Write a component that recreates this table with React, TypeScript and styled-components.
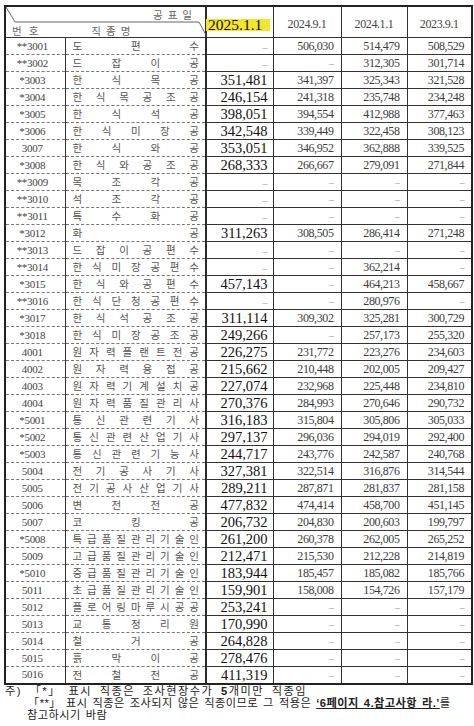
import React from "react"
import styled, { createGlobalStyle } from "styled-components"

const GlobalStyle = createGlobalStyle`
  html, body {
    margin: 0;
    padding: 0;
    background: #ffffff;
  }
`

const Page = styled.div`
  padding: 5px 3px 0 4px;
  width: 467px;
`

const WageTable = styled.table`
  width: 467px;
  border-collapse: collapse;
  table-layout: fixed;
  border: 2px solid #222;
`

const HeadRow = styled.tr`
  height: 30px;
`

const CornerCell = styled.th`
  position: relative;
  padding: 0;
  border-right: 2px solid #2a2a2a;
  border-bottom: 1px solid #333;
  font-weight: normal;
  vertical-align: top;
`

const CornerInner = styled.div`
  display: flex;
  flex-direction: column;
  justify-content: space-between;
  height: 30px;
  padding: 2px 8px 1px 6px;
  box-sizing: border-box;
  font-family: "Noto Sans CJK KR", sans-serif;
  font-size: 10.5px;
  line-height: 11px;
  color: #666;
`

const CornerTop = styled.div`
  text-align: right;
  letter-spacing: 5px;
`

const CornerBottom = styled.div`
  display: flex;
  gap: 46px;
`

const Spaced = styled.span<{ $gap: number }>`
  letter-spacing: ${(p) => p.$gap}px;
`

const Slash = styled.svg`
  position: absolute;
  left: 0;
  top: 0;
  pointer-events: none;
`

const DateCell = styled.th<{ $main?: boolean }>`
  padding: 5px 0 0 0;
  border-right: 1px solid #333;
  border-bottom: 1px solid #333;
  font-family: "Liberation Serif", serif;
  font-weight: normal;
  font-size: ${(p) => (p.$main ? "15.5px" : "12px")};
  letter-spacing: ${(p) => (p.$main ? "0" : "-0.4px")};
  color: ${(p) => (p.$main ? "#111" : "#444")};
  text-align: ${(p) => (p.$main ? "left" : "center")};
  vertical-align: middle;
`

const Marker = styled.span`
  display: inline-block;
  background: #f5e52c;
  line-height: 12px;
  padding: 0 3px 0 2px;
  margin-left: -1px;
  width: 59px;
`

const Row = styled.tr`
  height: 17px;
`

const CodeCell = styled.td`
  padding: 0 6px 0 0;
  border-right: 1px solid #333;
  border-bottom: 1px dashed #777;
  font-family: "Liberation Serif", serif;
  font-size: 11px;
  letter-spacing: -0.3px;
  color: #444;
  text-align: center;
  line-height: 1;
`

const NameCell = styled.td`
  padding: 0 6px 0 7px;
  border-right: 2px solid #2a2a2a;
  border-bottom: 1px dashed #777;
  font-family: "Noto Sans CJK KR", sans-serif;
  font-size: 10.5px;
  color: #555;
  line-height: 1;
`

const Spread = styled.div`
  display: flex;
  justify-content: space-between;
`

const ValueCell = styled.td<{ $main?: boolean }>`
  padding: 0 ${(p) => (p.$main ? "5px" : "7px")} 0 0;
  border-right: 1px solid #333;
  border-bottom: 1px solid #333;
  font-family: "Liberation Serif", serif;
  font-size: ${(p) => (p.$main ? "14.5px" : "12px")};
  letter-spacing: ${(p) => (p.$main ? "0" : "-0.4px")};
  color: ${(p) => (p.$main ? "#111" : "#3c3c3c")};
  text-align: right;
  line-height: 1;
`

const Dash = styled.span`
  font-size: 10px;
  color: #999;
`

const Notes = styled.div`
  font-family: "Liberation Sans", "Noto Sans CJK KR", sans-serif;
  font-size: 11.2px;
  line-height: 12px;
  color: #222;
`

const NoteLine = styled.div<{ $indent: number; $track: number; $words: number }>`
  padding-left: ${(p) => p.$indent}px;
  letter-spacing: ${(p) => p.$track}px;
  word-spacing: ${(p) => p.$words}px;
  white-space: nowrap;
`

const Ref = styled.span`
  font-weight: bold;
  text-decoration: underline;
`

type Entry = [string, string, string | null, string | null, string | null, string | null]

const rows: Entry[] = [
  ["**3001", "도편수", null, "506,030", "514,479", "508,529"],
  ["**3002", "드잡이공", null, null, "312,305", "301,714"],
  ["*3003", "한식목공", "351,481", "341,397", "325,343", "321,528"],
  ["*3004", "한식목공조공", "246,154", "241,318", "235,748", "234,248"],
  ["*3005", "한식석공", "398,051", "394,554", "412,988", "377,463"],
  ["*3006", "한식미장공", "342,548", "339,449", "322,458", "308,123"],
  ["3007", "한식와공", "353,051", "346,952", "362,888", "339,525"],
  ["*3008", "한식와공조공", "268,333", "266,667", "279,091", "271,844"],
  ["**3009", "목조각공", null, null, null, null],
  ["**3010", "석조각공", null, null, null, null],
  ["**3011", "특수화공", null, null, null, null],
  ["*3012", "화공", "311,263", "308,505", "286,414", "271,248"],
  ["**3013", "드잡이공편수", null, null, null, null],
  ["**3014", "한식미장공편수", null, null, "362,214", null],
  ["*3015", "한식와공편수", "457,143", null, "464,213", "458,667"],
  ["**3016", "한식단청공편수", null, null, "280,976", null],
  ["*3017", "한식석공조공", "311,114", "309,302", "325,281", "300,729"],
  ["*3018", "한식미장공조공", "249,266", null, "257,173", "255,320"],
  ["4001", "원자력플랜트전공", "226,275", "231,772", "223,276", "234,603"],
  ["4002", "원자력용접공", "215,662", "210,448", "202,005", "209,427"],
  ["4003", "원자력기계설치공", "227,074", "232,968", "225,448", "234,810"],
  ["4004", "원자력품질관리사", "270,376", "284,993", "270,646", "290,732"],
  ["*5001", "통신관련기사", "316,183", "315,804", "305,806", "305,033"],
  ["*5002", "통신관련산업기사", "297,137", "296,036", "294,019", "292,400"],
  ["*5003", "통신관련기능사", "244,717", "243,776", "242,587", "240,768"],
  ["5004", "전기공사기사", "327,381", "322,514", "316,876", "314,544"],
  ["5005", "전기공사산업기사", "289,211", "287,871", "281,837", "281,158"],
  ["5006", "변전전공", "477,832", "474,414", "458,700", "451,145"],
  ["5007", "코킹공", "206,732", "204,830", "200,603", "199,797"],
  ["*5008", "특급품질관리기술인", "261,200", "260,378", "262,005", "265,252"],
  ["5009", "고급품질관리기술인", "212,471", "215,530", "212,228", "214,819"],
  ["*5010", "중급품질관리기술인", "183,944", "185,457", "185,082", "185,766"],
  ["5011", "초급품질관리기술인", "159,901", "158,008", "154,726", "157,179"],
  ["5012", "플로어링마루시공공", "253,241", null, null, null],
  ["5013", "교통정리원", "170,990", null, null, null],
  ["5014", "철거공", "264,828", null, null, null],
  ["5015", "흙막이공", "278,476", null, null, null],
  ["5016", "전철전공", "411,319", null, null, null],
]

const Value = ({ v, main }: { v: string | null; main?: boolean }) => (
  <ValueCell $main={main}>{v ? v : <Dash>–</Dash>}</ValueCell>
)

export default function App() {
  return (
    <Page>
      <GlobalStyle />
      <WageTable>
        <colgroup>
          <col style={{ width: 60 }} />
          <col style={{ width: 141 }} />
          <col style={{ width: 67 }} />
          <col style={{ width: 68 }} />
          <col style={{ width: 66 }} />
          <col style={{ width: 65 }} />
        </colgroup>
        <thead>
          <HeadRow>
            <CornerCell colSpan={2}>
              <Slash width="201" height="30" viewBox="0 0 201 30">
                <polyline
                  points="0,0 9,15 193,15 201,30"
                  fill="none"
                  stroke="#555"
                  strokeWidth="0.9"
                />
              </Slash>
              <CornerInner>
                <CornerTop>공표일</CornerTop>
                <CornerBottom>
                  <Spaced $gap={7}>번호</Spaced>
                  <Spaced $gap={5}>직종명</Spaced>
                </CornerBottom>
              </CornerInner>
            </CornerCell>
            <DateCell $main>
              <Marker>2025.1.1</Marker>
            </DateCell>
            <DateCell>2024.9.1</DateCell>
            <DateCell>2024.1.1</DateCell>
            <DateCell>2023.9.1</DateCell>
          </HeadRow>
        </thead>
        <tbody>
          {rows.map(([code, name, a, b, c, d]) => (
            <Row key={code}>
              <CodeCell>{code}</CodeCell>
              <NameCell>
                <Spread>
                  {Array.from(name).map((ch, i) => (
                    <span key={i}>{ch}</span>
                  ))}
                </Spread>
              </NameCell>
              <Value v={a} main />
              <Value v={b} />
              <Value v={c} />
              <Value v={d} />
            </Row>
          ))}
        </tbody>
      </WageTable>
      <Notes>
        <NoteLine $indent={1} $track={1.5} $words={3}>
          주) 「*」 표시 직종은 조사현장수가 <b>5</b>개미만 직종임
        </NoteLine>
        <NoteLine $indent={24} $track={0.45} $words={1.5}>
          「**」 표시 직종은 조사되지 않은 직종이므로 그 적용은 <Ref>‘6페이지 4.참고사항 라.’</Ref>를
        </NoteLine>
        <NoteLine $indent={23} $track={0.45} $words={1.5}>
          참고하시기 바람
        </NoteLine>
      </Notes>
    </Page>
  )
}
